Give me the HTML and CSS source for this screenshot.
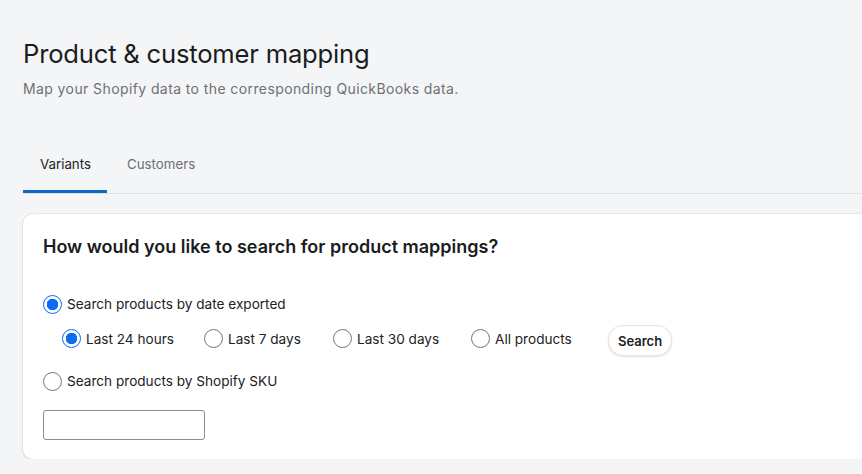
FILE: index.html
```html
<!DOCTYPE html>
<html>
<head>
<meta charset="utf-8">
<link rel="stylesheet" href="styles.css">
</head>
<body>
<div class="page">
  <h1 class="title">Product &amp; customer mapping</h1>
  <p class="subtitle">Map your Shopify data to the corresponding QuickBooks data.</p>
  <div class="tabs">
    <div class="tab active">Variants</div>
    <div class="tab">Customers</div>
  </div>
  <div class="card">
    <h2 class="card-title">How would you like to search for product mappings?</h2>
    <label class="radio-row">
      <span class="radio checked"></span>
      <span>Search products by date exported</span>
    </label>
    <div class="sub-row">
      <label class="radio-opt opt1"><span class="radio checked"></span><span>Last 24 hours</span></label>
      <label class="radio-opt opt2"><span class="radio"></span><span>Last 7 days</span></label>
      <label class="radio-opt opt3"><span class="radio"></span><span>Last 30 days</span></label>
      <label class="radio-opt opt4"><span class="radio"></span><span>All products</span></label>
      <button class="btn">Search</button>
    </div>
    <label class="radio-row sku">
      <span class="radio"></span>
      <span>Search products by Shopify SKU</span>
    </label>
    <input class="sku-input" type="text">
  </div>
</div>
</body>
</html>
```
FILE: styles.css
```css
html, body {
  margin: 0;
  padding: 0;
  background: #f4f5f7;
  font-family: Inter, "Noto Sans", sans-serif;
  color: #202223;
  overflow: hidden;
}
.page {
  padding: 37px 0 0 23px;
  width: 900px;
}
.title {
  margin: 0;
  font-size: 25.6px;
  line-height: 34px;
  font-weight: 400;
  letter-spacing: -0.2px;
  color: #1a1c1d;
}
.subtitle {
  margin: 8px 0 0;
  font-size: 14px;
  line-height: 20px;
  letter-spacing: 0.4px;
  color: #6d7175;
}
.tabs {
  margin-top: 48px;
  display: flex;
  border-bottom: 1px solid #e1e3e5;
}
.tab {
  font-size: 13.3px;
  line-height: 20px;
  color: #6d7175;
  padding: 7px 16px 16px 17px;
  margin-right: 3px;
  border-bottom: 3px solid transparent;
}
.tab.active {
  color: #202223;
  border-bottom-color: #0b6bc2;
}
.card {
  margin-top: 20px;
  background: #fff;
  border-radius: 10px;
  box-shadow: 0 0 0 1px rgba(63,63,68,0.04), 0 1px 3px rgba(63,63,68,0.15);
  padding: 21px 20px 19px;
}
.card-title {
  margin: 0;
  font-size: 18px;
  line-height: 24px;
  font-weight: 600;
  color: #1a1c1d;
}
.radio-row, .radio-opt {
  display: flex;
  align-items: center;
  font-size: 13.6px;
  line-height: 20px;
  color: #202223;
}
.radio-row { margin-top: 35px; }
.radio-row.sku { margin-top: 15px; }
.radio {
  box-sizing: border-box;
  width: 19px;
  height: 19px;
  border-radius: 50%;
  border: 1px solid #767676;
  margin-right: 5px;
  background: #fff;
  flex: none;
}
.radio.checked {
  border: 1px solid #0a68f5;
  background: radial-gradient(circle, #0b6cf8 0 5.5px, #fff 6px);
  box-shadow: inset 0 0 0 1px #fff;
}
.sub-row {
  display: flex;
  align-items: center;
  margin-top: 7px;
  padding-left: 19px;
}
.opt1 { width: 142px; }
.opt2 { width: 129px; }
.opt3 { width: 138px; }
.opt4 { width: 137px; }
.btn {
  font-family: Inter, "Noto Sans", sans-serif;
  font-size: 13px;
  font-weight: 600;
  color: #202223;
  background: #fff;
  border: 1px solid #e3e3e3;
  border-radius: 15px;
  height: 31px;
  padding: 0 9px;
  box-shadow: 0 1px 2px rgba(0,0,0,0.12);
  margin-top: 4px;
}
.sku-input {
  display: block;
  box-sizing: border-box;
  margin-top: 19px;
  width: 162px;
  height: 30px;
  border: 1px solid #8c8c8c;
  border-radius: 3px;
  background: #fff;
}
```
